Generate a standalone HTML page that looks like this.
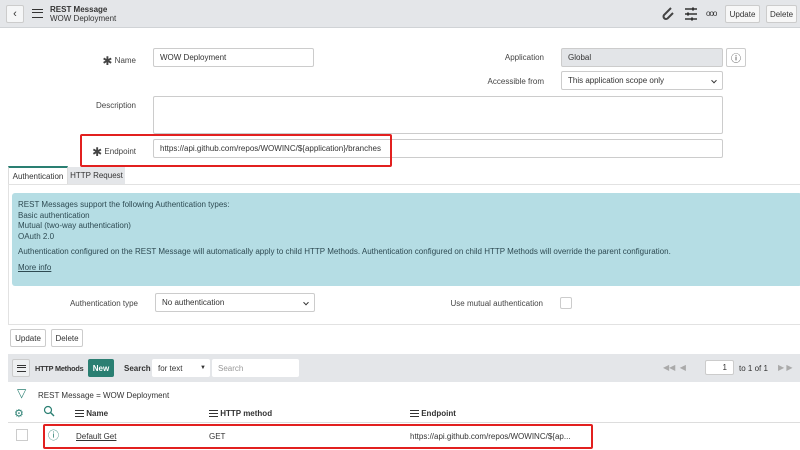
<!DOCTYPE html>
<html><head><style>
*{box-sizing:border-box;margin:0;padding:0}
body{width:800px;height:450px;overflow:hidden;background:#fff;font-family:"Liberation Sans",sans-serif;font-size:8px;color:#333;position:relative}
.a{position:absolute}
.inp{position:absolute;border:1px solid #ccc;border-radius:2px;background:#fff;padding:0 6px;display:flex;align-items:center;font-size:8px}
.lbl{position:absolute;text-align:right;font-size:8px;color:#444}
.btn{position:absolute;border:1px solid #ccc;border-radius:2px;background:#f7f7f7;display:flex;align-items:center;justify-content:center;font-size:8px;color:#333}
.red{position:absolute;border:2px solid #e2201f;border-radius:2px}
.chev{position:absolute;right:6px;top:50%;transform:translateY(-60%) rotate(45deg);width:4px;height:4px;border-right:1.3px solid #333;border-bottom:1.3px solid #333}
.ham{display:inline-block;width:9px;height:7px;border-top:1.5px solid #333;border-bottom:1.5px solid #333;position:relative;vertical-align:middle}
.ham:after{content:"";position:absolute;left:0;right:0;top:1.2px;border-top:1.5px solid #333}
</style></head><body>
<div class="a" style="left:0;top:0;width:800px;height:28px;background:#e4e6e9;border-bottom:1px solid #d0d3d6"></div>
<div class="btn" style="left:6px;top:5px;width:18px;height:18px;font-size:11px;background:#f5f6f7">‹</div>
<div class="a" style="left:32px;top:9px"><span class="ham" style="width:11px;height:9px"></span></div>
<div class="a" style="left:50px;top:5px;font-size:8px;font-weight:bold;color:#333">REST Message</div>
<div class="a" style="left:50px;top:14px;font-size:8px;color:#333">WOW Deployment</div>
<svg class="a" style="left:661px;top:6px" width="14" height="16" viewBox="0 0 14 16"><path d="M10 2 L3 9 a2.5 2.5 0 0 0 3.5 3.5 L12 7" fill="none" stroke="#444" stroke-width="2"/></svg>
<svg class="a" style="left:684px;top:7px" width="14" height="14" viewBox="0 0 14 14"><g stroke="#333" stroke-width="1.4"><path d="M1 2H13M1 7H13M1 12H13"/><path d="M9 0.5V3.5M4 5.5V8.5M8 10.5V13.5" stroke-width="2"/></g></svg>
<div class="a" style="left:706px;top:9px;font-size:8px;letter-spacing:-1px">ooo</div>
<div class="btn" style="left:725px;top:5px;width:35px;height:18px">Update</div>
<div class="btn" style="left:766px;top:5px;width:31px;height:18px">Delete</div>

<div class="lbl" style="left:100px;top:52px;width:36px"><span style="font-size:12px;position:relative;top:2px">✱</span> Name</div>
<div class="inp" style="left:153px;top:48px;width:161px;height:19px">WOW Deployment</div>
<div class="lbl" style="left:470px;top:53px;width:74px">Application</div>
<div class="inp" style="left:561px;top:48px;width:162px;height:19px;background:#e3e5e8">Global</div>
<div class="btn" style="left:726px;top:48px;width:20px;height:19px;background:#fff;font-size:10px">ⓘ</div>
<div class="lbl" style="left:450px;top:77px;width:94px">Accessible from</div>
<div class="inp" style="left:561px;top:71px;width:162px;height:19px">This application scope only<span class="chev"></span></div>
<div class="lbl" style="left:80px;top:101px;width:56px">Description</div>
<div class="inp" style="left:153px;top:96px;width:570px;height:38px"></div>
<div class="lbl" style="left:80px;top:143px;width:56px"><span style="font-size:12px;position:relative;top:2px">✱</span> Endpoint</div>
<div class="inp" style="left:153px;top:139px;width:570px;height:19px">https://api.github.com/repos/WOWINC/${application}/branches</div>
<div class="red" style="left:80px;top:134px;width:312px;height:33px"></div>

<div class="a" style="left:8px;top:166px;width:60px;height:19px;border-top:2px solid #2a7f72;background:#fff;display:flex;align-items:center;justify-content:center;border-left:1px solid #ddd;border-right:1px solid #ddd">Authentication</div>
<div class="a" style="left:68px;top:167px;width:57px;height:17px;background:#e4e6e9;display:flex;align-items:center;justify-content:center">HTTP Request</div>
<div class="a" style="left:8px;top:184px;width:800px;height:141px;border:1px solid #e2e2e2"></div>
<div class="a" style="left:12px;top:193px;width:790px;height:93px;background:#b5dde4;border-radius:3px;padding:7px 6px;line-height:10.5px;color:#2e4a52">REST Messages support the following Authentication types:<br>Basic authentication<br>Mutual (two-way authentication)<br>OAuth 2.0<div style="margin-top:5px">Authentication configured on the REST Message will automatically apply to child HTTP Methods. Authentication configured on child HTTP Methods will override the parent configuration.</div><div style="margin-top:5px;text-decoration:underline">More info</div></div>
<div class="lbl" style="left:40px;top:299px;width:98px">Authentication type</div>
<div class="inp" style="left:155px;top:293px;width:160px;height:19px">No authentication<span class="chev"></span></div>
<div class="lbl" style="left:420px;top:299px;width:123px">Use mutual authentication</div>
<div class="a" style="left:560px;top:297px;width:12px;height:12px;border:1px solid #ccc;border-radius:2px"></div>

<div class="btn" style="left:10px;top:329px;width:36px;height:18px;background:#fff">Update</div>
<div class="btn" style="left:51px;top:329px;width:32px;height:18px;background:#fff">Delete</div>

<div class="a" style="left:8px;top:354px;width:792px;height:28px;background:#e4e6e9"></div>
<div class="btn" style="left:12px;top:359px;width:18px;height:18px;background:#eef0f1"><span class="ham"></span></div>
<div class="a" style="left:35px;top:364px;font-weight:bold;font-size:7.3px;letter-spacing:-0.2px">HTTP Methods</div>
<div class="a" style="left:88px;top:359px;width:26px;height:18px;background:#2a7f72;color:#fff;font-weight:bold;display:flex;align-items:center;justify-content:center;border-radius:2px">New</div>
<div class="a" style="left:124px;top:364px;font-weight:bold">Search</div>
<div class="inp" style="left:152px;top:359px;width:58px;height:18px;border:none">for text<span style="position:absolute;right:4px;font-size:6px">▼</span></div>
<div class="inp" style="left:212px;top:359px;width:87px;height:18px;border:none;color:#999">Search</div>
<div class="a" style="left:663px;top:363px;color:#aaa;font-size:8px">◀◀ &nbsp;◀</div>
<div class="inp" style="left:705px;top:360px;width:29px;height:15px;justify-content:flex-end">1</div>
<div class="a" style="left:739px;top:364px">to 1 of 1</div>
<div class="a" style="left:778px;top:363px;color:#aaa">▶ ▶</div>

<div class="a" style="left:17px;top:386px;font-size:12px;color:#2a7f72">▽</div>
<div class="a" style="left:38px;top:391px">REST Message = WOW Deployment</div>
<div class="a" style="left:14px;top:407px;font-size:11px;color:#2a7f72">⚙</div>
<svg class="a" style="left:43px;top:405px" width="12" height="12" viewBox="0 0 12 12"><circle cx="5" cy="5" r="3.5" fill="none" stroke="#2a7f72" stroke-width="1.2"/><path d="M7.5 7.5L11 11" stroke="#2a7f72" stroke-width="1.4"/></svg>
<div class="a" style="left:75px;top:409px;font-weight:bold"><span class="ham"></span> Name</div>
<div class="a" style="left:209px;top:409px;font-weight:bold"><span class="ham"></span> HTTP method</div>
<div class="a" style="left:410px;top:409px;font-weight:bold"><span class="ham"></span> Endpoint</div>
<div class="a" style="left:8px;top:422px;width:792px;border-top:1px solid #ddd"></div>
<div class="a" style="left:16px;top:429px;width:12px;height:12px;border:1px solid #ccc;background:#fff"></div>
<div class="a" style="left:48px;top:427px;font-size:11px;color:#2a7f72">ⓘ</div>
<div class="a" style="left:76px;top:432px;text-decoration:underline">Default Get</div>
<div class="a" style="left:209px;top:432px">GET</div>
<div class="a" style="left:410px;top:432px">https://api.github.com/repos/WOWINC/${ap...</div>
<div class="red" style="left:43px;top:424px;width:550px;height:25px"></div>
</body></html>
